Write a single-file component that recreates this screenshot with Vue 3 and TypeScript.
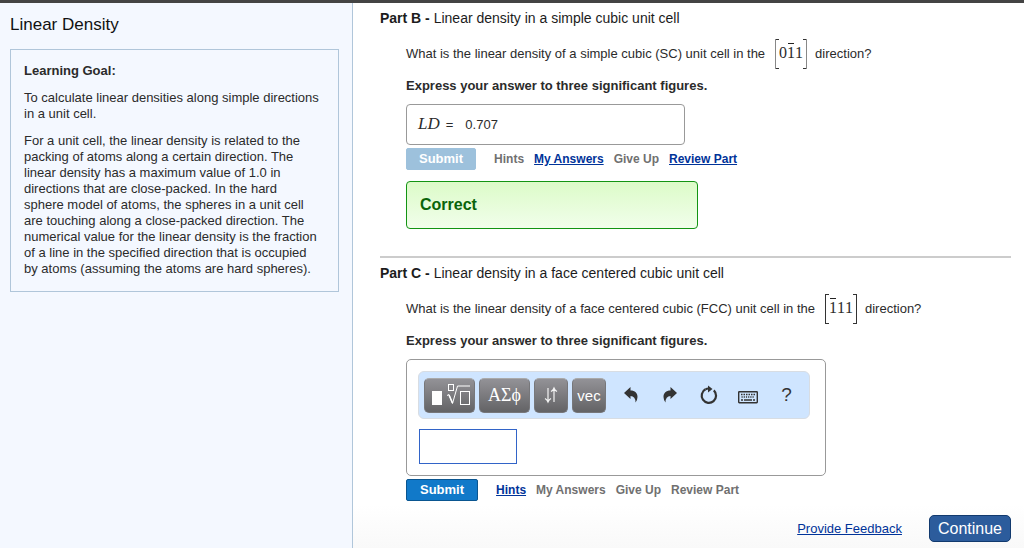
<script setup lang="ts">
import { ref } from 'vue'

interface Digit {
  value: string
  bar?: boolean
}

interface ActionLink {
  label: string
  active: boolean
}

const directionB: Digit[] = [{ value: '0' }, { value: '1', bar: true }, { value: '1' }]
const directionC: Digit[] = [{ value: '1', bar: true }, { value: '1' }, { value: '1' }]

const actionsB: ActionLink[] = [
  { label: 'Hints', active: false },
  { label: 'My Answers', active: true },
  { label: 'Give Up', active: false },
  { label: 'Review Part', active: true },
]
const actionsC: ActionLink[] = [
  { label: 'Hints', active: true },
  { label: 'My Answers', active: false },
  { label: 'Give Up', active: false },
  { label: 'Review Part', active: false },
]

const answer = ref('')
</script>

<template>
  <div class="page">
    <aside class="sidebar">
      <h1 class="title">Linear Density</h1>
      <section class="goal">
        <h2 class="goal-heading">Learning Goal:</h2>
        <p>To calculate linear densities along simple directions in a unit cell.</p>
        <p>
          For a unit cell, the linear density is related to the packing of atoms along a certain
          direction. The linear density has a maximum value of 1.0 in directions that are
          close-packed. In the hard sphere model of atoms, the spheres in a unit cell are touching
          along a close-packed direction. The numerical value for the linear density is the fraction
          of a line in the specified direction that is occupied by atoms (assuming the atoms are
          hard spheres).
        </p>
      </section>
    </aside>

    <main class="content">
      <section class="part">
        <h2 class="part-title"><b>Part B - </b>Linear density in a simple cubic unit cell</h2>
        <div class="part-body">
          <p class="question">
            <span>What is the linear density of a simple cubic (SC) unit cell in the</span>
            <span class="bracket soft">
              <span v-for="(d, i) in directionB" :key="i" class="digit" :class="{ bar: d.bar }">{{ d.value }}</span>
            </span>
            <span>direction?</span>
          </p>
          <p class="instruction">Express your answer to three significant figures.</p>
          <div class="answer-box">
            <i class="variable">LD</i><span class="equals">=</span><output>0.707</output>
          </div>
          <div class="actions">
            <button class="submit" type="button" disabled>Submit</button>
            <template v-for="a in actionsB" :key="a.label">
              <a v-if="a.active" href="#" class="action">{{ a.label }}</a>
              <span v-else class="action off">{{ a.label }}</span>
            </template>
          </div>
          <div class="feedback" role="status">Correct</div>
        </div>
      </section>

      <section class="part part-c">
        <h2 class="part-title"><b>Part C - </b>Linear density in a face centered cubic unit cell</h2>
        <div class="part-body">
          <p class="question">
            <span>What is the linear density of a face centered cubic (FCC) unit cell in the</span>
            <span class="bracket">
              <span v-for="(d, i) in directionC" :key="i" class="digit" :class="{ bar: d.bar }">{{ d.value }}</span>
            </span>
            <span>direction?</span>
          </p>
          <p class="instruction">Express your answer to three significant figures.</p>
          <div class="editor">
            <div class="toolbar" role="toolbar" aria-label="Equation tools">
              <button class="key wide" type="button" aria-label="Templates">
                <svg width="40" height="24" viewBox="0 0 40 24" fill="none" stroke="#fff">
                  <rect x="2" y="8" width="10" height="14" fill="#fff" stroke="none" />
                  <rect x="18.500" y="1.500" width="5" height="6" />
                  <path d="M17 12.500l2-1 3.500 9 5-17.500h13" />
                  <path d="M19 12l3.500 8" stroke-width="1.600" />
                  <rect x="30.500" y="8.500" width="9" height="13" />
                </svg>
              </button>
              <button class="key wide greek" type="button">ΑΣϕ</button>
              <button class="key" type="button" aria-label="Subscript and superscript arrows">
                <svg width="16" height="18" viewBox="0 0 16 18" fill="none" stroke="#f4f4f4" stroke-width="1.200">
                  <path d="M5 2v14M2 12.500q2 1 3 3.500q1-2.500 3-3.500M11 16V2M8 5.500q2-1 3-3.500q1 2.500 3 3.500" />
                </svg>
              </button>
              <button class="key" type="button">vec</button>
              <div class="tools">
                <button class="tool" type="button" aria-label="Undo">
                  <svg width="16" height="18" viewBox="0 0 16 18" fill="#333">
                    <path d="M1 7L7.500 1V4.500C12 4.500 14.500 7 14.500 11Q14.500 14 12.500 16.500Q12.500 10 7.500 10V13Z" />
                  </svg>
                </button>
                <button class="tool" type="button" aria-label="Redo">
                  <svg width="16" height="18" viewBox="0 0 16 18" fill="#333">
                    <path d="M15 7L8.500 1V4.500C4 4.500 1.500 7 1.500 11Q1.500 14 3.500 16.500Q3.500 10 8.500 10V13Z" />
                  </svg>
                </button>
                <button class="tool" type="button" aria-label="Reset">
                  <svg width="20" height="20" viewBox="0 0 20 20" fill="none" stroke="#333">
                    <path d="M6.500 4.300A7.200 7.200 0 1 0 14.800 5.400" stroke-width="2.200" />
                    <path d="M9 .5L13.500 4L9 7.500Z" fill="#333" stroke="none" />
                    <path d="M6.500 4.300Q8 3.500 10 3.600" stroke-width="2" />
                  </svg>
                </button>
                <button class="tool" type="button" aria-label="Keyboard">
                  <svg width="20" height="20" viewBox="0 0 20 20" fill="none" stroke="#333">
                    <rect x=".7" y="6.700" width="18.600" height="11" rx=".6" stroke-width="1.400" />
                    <path d="M3 9.500h14" stroke-dasharray="1.500 1" stroke-width="1.500" />
                    <path d="M3.500 12h13" stroke-dasharray="1.200 1" stroke-width="1.500" />
                    <path d="M3 15h2M6 15h8M15 15h2" stroke-width="1.500" />
                  </svg>
                </button>
                <button class="tool help" type="button">?</button>
              </div>
            </div>
            <input v-model="answer" class="answer-input" type="text" aria-label="Answer" />
          </div>
          <div class="actions">
            <button class="submit" type="button">Submit</button>
            <template v-for="a in actionsC" :key="a.label">
              <a v-if="a.active" href="#" class="action">{{ a.label }}</a>
              <span v-else class="action off">{{ a.label }}</span>
            </template>
          </div>
        </div>
      </section>

      <footer class="footer">
        <a href="#" class="provide">Provide Feedback</a>
        <button class="continue" type="button">Continue</button>
      </footer>
    </main>
  </div>
</template>

<style>
body {
  margin: 0;
}
</style>

<style scoped>
.page {
  box-sizing: border-box;
  display: flex;
  min-height: 100vh;
  border-top: 3px solid #444;
  background: #fff;
  color: #2b2b2b;
  font: 13px/16px "Liberation Sans", Arial, sans-serif;
}
.page * {
  box-sizing: border-box;
}
h1,
h2,
p {
  margin: 0;
}
button {
  font-family: inherit;
  cursor: pointer;
}

.sidebar {
  flex: 0 0 353px;
  padding: 12px 13px 12px 10px;
  border-right: 1px solid #b0c6da;
  background: #f4f8ff;
}
.title {
  color: #111;
  font-size: 17px;
  font-weight: 400;
  line-height: 20px;
}
.goal {
  margin-top: 14px;
  padding: 13px 18px 14px 13px;
  border: 1px solid #b0c6da;
}
.goal-heading {
  font-size: 13px;
  line-height: 16px;
}
.goal p {
  margin-top: 11px;
}

.content {
  display: flex;
  flex: 1;
  flex-direction: column;
  min-width: 0;
  padding: 6px 13px 6px 27px;
  background: linear-gradient(#fff 92%, #f9f9f9);
}
.part-title {
  color: #1c1c1c;
  font-size: 14px;
  font-weight: 400;
  line-height: 18px;
}
.part-body {
  padding-left: 26px;
}
.part-c {
  margin-top: 27px;
  padding-top: 6px;
  border-top: 2px solid #ccc;
}
.question {
  display: flex;
  align-items: center;
  margin-top: 12px;
}
.bracket {
  position: relative;
  display: flex;
  height: 30px;
  margin: 0 8px 0 10px;
  padding: 0 3px;
  border: 1px solid #333;
  border-width: 0 1px;
  font: 16px/28px "Liberation Serif", serif;
}
.bracket.soft {
  border-color: #888;
}
.bracket::before,
.bracket::after {
  position: absolute;
  top: 0;
  bottom: 0;
  width: 3px;
  border: 1px solid #333;
  border-width: 1px 0;
  content: "";
}
.bracket::before {
  left: 0;
}
.bracket::after {
  right: 0;
}
.digit {
  position: relative;
}
.bar::before {
  position: absolute;
  top: 4px;
  left: 1px;
  right: 1px;
  height: 1px;
  background: #222;
  content: "";
}
.instruction {
  margin-top: 9px;
  font-weight: 700;
}
.answer-box {
  display: flex;
  align-items: baseline;
  width: 279px;
  max-width: 100%;
  margin-top: 10px;
  padding: 9px 11px;
  border: 1px solid #999;
  border-radius: 4px;
  line-height: 20px;
}
.variable {
  font: italic 17px/20px "Liberation Serif", serif;
}
.equals {
  margin: 0 12px 0 6px;
}
.actions {
  display: flex;
  align-items: center;
  gap: 10px;
  margin-top: 3px;
}
.submit {
  height: 22px;
  margin-right: 8px;
  padding: 0 13px;
  border: 1px solid #0a5590;
  border-radius: 2px;
  background: #1179c9;
  color: #fff;
  font-size: 13px;
  font-weight: 700;
  line-height: 20px;
}
.submit:disabled {
  padding: 0 12px;
  border-color: #9dc1dc;
  background: #9dc1dc;
}
.action {
  color: #003399;
  font-size: 12px;
  font-weight: 700;
}
.action.off {
  color: #707070;
}
.feedback {
  width: 292px;
  max-width: 100%;
  margin-top: 11px;
  padding: 14px 13px;
  border: 1px solid #139413;
  border-radius: 4px;
  background: linear-gradient(#dcfbc8, #f1feeb);
  color: #0a640a;
  font-size: 16px;
  font-weight: 700;
  line-height: 18px;
}

.editor {
  width: 420px;
  max-width: 100%;
  margin-top: 10px;
  padding: 11px 15px 11px 11px;
  border: 1px solid #999;
  border-radius: 5px;
}
.toolbar {
  display: flex;
  align-items: center;
  gap: 4px;
  height: 48px;
  padding: 0 3px 0 5px;
  border: 1px solid #d8dde3;
  border-radius: 6px;
  background: #cfe5ff;
}
.key {
  display: flex;
  align-items: center;
  justify-content: center;
  width: 34px;
  height: 35px;
  padding: 0;
  border: 1px solid #77777a;
  border-top-color: #aaa;
  border-radius: 5px;
  background: linear-gradient(#939297, #636365);
  color: #fff;
  font-size: 15px;
}
.key.wide {
  width: 51px;
}
.key.greek {
  font: 18px/20px "Liberation Serif", serif;
}
.tools {
  display: flex;
  flex: 1;
  margin-left: 1px;
}
.tool {
  display: flex;
  flex: 1;
  align-items: center;
  justify-content: center;
  height: 34px;
  padding: 0;
  border: 0;
  background: none;
  color: #333;
}
.help {
  font-size: 19px;
}
.answer-input {
  display: block;
  width: 98px;
  height: 35px;
  margin: 10px 0 0 1px;
  padding: 0 6px;
  border: 1px solid #3264c8;
  outline: 0;
  background: #fff;
  font: inherit;
}

.footer {
  display: flex;
  align-items: center;
  justify-content: flex-end;
  gap: 27px;
  margin-top: auto;
}
.provide {
  color: #003399;
}
.continue {
  height: 27px;
  padding: 0 8px;
  border: 1px solid #123a6e;
  border-radius: 5px;
  background: #2c5c9c;
  color: #fff;
  font-size: 16px;
}
</style>
